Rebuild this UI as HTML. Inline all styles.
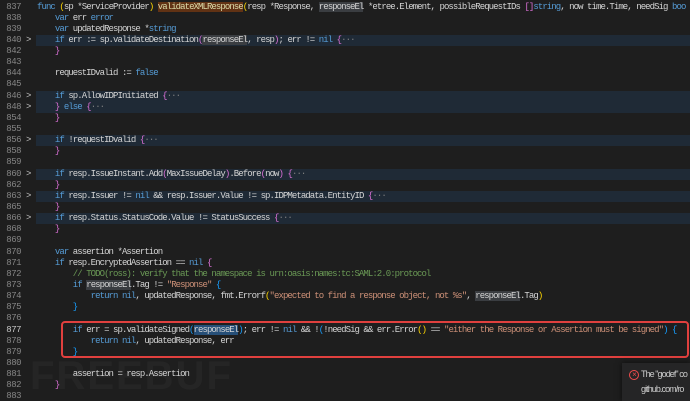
<!DOCTYPE html>
<html><head><meta charset="utf-8"><style>
html,body{margin:0;padding:0;width:690px;height:401px;overflow:hidden;background:#1e1e1e;}
.wrap{position:relative;width:690px;height:401px;font-family:"Liberation Mono",monospace;font-size:9px;letter-spacing:-0.93px;}
.row{position:absolute;left:0;width:690px;height:11.14px;line-height:11.14px;white-space:pre;}
.hl{position:absolute;left:36px;right:0;top:0;bottom:0;background:#1f2a36;}
.ln{position:absolute;left:0;width:21px;text-align:right;color:#858585;letter-spacing:-0.5px;}
.ar{position:absolute;left:26px;color:#c5c5c5;font-size:9px;}
.c{position:absolute;left:37px;color:#d4d4d4;}
.k{color:#569cd6}.s{color:#ce9178}.cm{color:#6a9955}.f{color:#dcdcaa}.t{color:#4ec9b0}
.y{color:#ffd700}.p{color:#da70d6}.b{color:#179fff}.d{color:#808080}
.sel{background:#3a3d41}.fn{background:#613214;color:#dcdcaa}.sb{background:#264f78}
</style></head><body><div class="wrap">
<div class="row" style="top:1.5px"><span class="ln">837</span><span class="c"><span class="k">func</span> <span class="y">(</span>sp *ServiceProvider<span class="y">)</span> <span class="fn">validateXMLResponse</span><span class="y">(</span>resp *Response, <span class="sel">responseEl</span> *etree.Element, possibleRequestIDs <span class="p">[]</span><span class="k">string</span>, now time.Time, needSig <span class="k">boo</span></span></div>
<div class="row" style="top:12.64px"><span class="ln">838</span><span class="c">    <span class="k">var</span> err <span class="k">error</span></span></div>
<div class="row" style="top:23.78px"><span class="ln">839</span><span class="c">    <span class="k">var</span> updatedResponse *<span class="k">string</span></span></div>
<div class="row" style="top:34.92px"><div class="hl"></div><span class="ln">840</span><span class="ar">&gt;</span><span class="c">    <span class="k">if</span> err := sp.validateDestination<span class="p">(</span><span class="sel">responseEl</span>, resp<span class="p">)</span>; err != <span class="k">nil</span> <span class="p">{</span><span class="d">···</span></span></div>
<div class="row" style="top:46.06px"><span class="ln">842</span><span class="c">    <span class="p">}</span></span></div>
<div class="row" style="top:57.2px"><span class="ln">843</span></div>
<div class="row" style="top:68.34px"><span class="ln">844</span><span class="c">    requestIDvalid := <span class="k">false</span></span></div>
<div class="row" style="top:79.48px"><span class="ln">845</span></div>
<div class="row" style="top:90.62px"><div class="hl"></div><span class="ln">846</span><span class="ar">&gt;</span><span class="c">    <span class="k">if</span> sp.AllowIDPInitiated <span class="p">{</span><span class="d">···</span></span></div>
<div class="row" style="top:101.76px"><div class="hl"></div><span class="ln">848</span><span class="ar">&gt;</span><span class="c">    <span class="p">}</span> <span class="k">else</span> <span class="p">{</span><span class="d">···</span></span></div>
<div class="row" style="top:112.9px"><span class="ln">854</span><span class="c">    <span class="p">}</span></span></div>
<div class="row" style="top:124.04px"><span class="ln">855</span></div>
<div class="row" style="top:135.18px"><div class="hl"></div><span class="ln">856</span><span class="ar">&gt;</span><span class="c">    <span class="k">if</span> !requestIDvalid <span class="p">{</span><span class="d">···</span></span></div>
<div class="row" style="top:146.32px"><span class="ln">858</span><span class="c">    <span class="p">}</span></span></div>
<div class="row" style="top:157.46px"><span class="ln">859</span></div>
<div class="row" style="top:168.6px"><div class="hl"></div><span class="ln">860</span><span class="ar">&gt;</span><span class="c">    <span class="k">if</span> resp.IssueInstant.Add<span class="p">(</span>MaxIssueDelay<span class="p">)</span>.Before<span class="p">(</span>now<span class="p">)</span> <span class="p">{</span><span class="d">···</span></span></div>
<div class="row" style="top:179.74px"><span class="ln">862</span><span class="c">    <span class="p">}</span></span></div>
<div class="row" style="top:190.88px"><div class="hl"></div><span class="ln">863</span><span class="ar">&gt;</span><span class="c">    <span class="k">if</span> resp.Issuer != <span class="k">nil</span> &amp;&amp; resp.Issuer.Value != sp.IDPMetadata.EntityID <span class="p">{</span><span class="d">···</span></span></div>
<div class="row" style="top:202.02px"><span class="ln">865</span><span class="c">    <span class="p">}</span></span></div>
<div class="row" style="top:213.16px"><div class="hl"></div><span class="ln">866</span><span class="ar">&gt;</span><span class="c">    <span class="k">if</span> resp.Status.StatusCode.Value != StatusSuccess <span class="p">{</span><span class="d">···</span></span></div>
<div class="row" style="top:224.3px"><span class="ln">868</span><span class="c">    <span class="p">}</span></span></div>
<div class="row" style="top:235.44px"><span class="ln">869</span></div>
<div class="row" style="top:246.58px"><span class="ln">870</span><span class="c">    <span class="k">var</span> assertion *Assertion</span></div>
<div class="row" style="top:257.72px"><span class="ln">871</span><span class="c">    <span class="k">if</span> resp.EncryptedAssertion == <span class="k">nil</span> <span class="p">{</span></span></div>
<div class="row" style="top:268.86px"><span class="ln">872</span><span class="c">        <span class="cm">// TODO(ross): verify that the namespace is urn:oasis:names:tc:SAML:2.0:protocol</span></span></div>
<div class="row" style="top:280px"><span class="ln">873</span><span class="c">        <span class="k">if</span> <span class="sel">responseEl</span>.Tag != <span class="s">"Response"</span> <span class="b">{</span></span></div>
<div class="row" style="top:291.14px"><span class="ln">874</span><span class="c">            <span class="k">return</span> <span class="k">nil</span>, updatedResponse, fmt.Errorf<span class="y">(</span><span class="s">"expected to find a response object, not %s"</span>, <span class="sel">responseEl</span>.Tag<span class="y">)</span></span></div>
<div class="row" style="top:302.28px"><span class="ln">875</span><span class="c">        <span class="b">}</span></span></div>
<div class="row" style="top:313.42px"><span class="ln">876</span></div>
<div class="row" style="top:324.56px"><span class="ln" style="color:#c6c6c6">877</span><span class="c">        <span class="k">if</span> err = sp.validateSigned<span class="b">(</span><span class="sb">responseEl</span><span class="b">)</span>; err != <span class="k">nil</span> &amp;&amp; !<span class="b">(</span>!needSig &amp;&amp; err.Error<span class="y">()</span> == <span class="s">"either the Response or Assertion must be signed"</span><span class="b">)</span> <span class="b">{</span></span></div>
<div class="row" style="top:335.7px"><span class="ln">878</span><span class="c">            <span class="k">return</span> <span class="k">nil</span>, updatedResponse, err</span></div>
<div class="row" style="top:346.84px"><span class="ln">879</span><span class="c">        <span class="b">}</span></span></div>
<div class="row" style="top:357.98px"><span class="ln">880</span></div>
<div class="row" style="top:369.12px"><span class="ln">881</span><span class="c">        assertion = resp.Assertion</span></div>
<div class="row" style="top:380.26px"><span class="ln">882</span><span class="c">    <span class="p">}</span></span></div>
<div class="row" style="top:391.4px"><span class="ln">883</span></div>
<div style="position:absolute;left:30px;top:356px;font-family:'Liberation Sans',sans-serif;font-size:40px;font-weight:bold;color:rgba(255,255,255,0.035);letter-spacing:2px;line-height:40px;">FREEBUF</div>
<div style="position:absolute;left:61px;top:321px;width:624px;height:33px;border:2px solid #e0403e;border-radius:4px;"></div>
<div style="position:absolute;left:622px;top:363px;width:68px;height:38px;background:#252526;box-shadow:0 0 6px rgba(0,0,0,.6);font-family:'Liberation Sans',sans-serif;font-size:9px;color:#cccccc;white-space:nowrap;overflow:hidden;">
<div style="position:absolute;left:7px;top:7px;width:8px;height:8px;border:1px solid #f14c4c;border-radius:50%;color:#f14c4c;font-size:8px;line-height:8px;text-align:center;">×</div>
<div style="position:absolute;left:19px;top:6px;line-height:11px;">The "godef" co</div>
<div style="position:absolute;left:19px;top:21px;line-height:11px;">github.com/ro</div>
</div>
</div></body></html>
